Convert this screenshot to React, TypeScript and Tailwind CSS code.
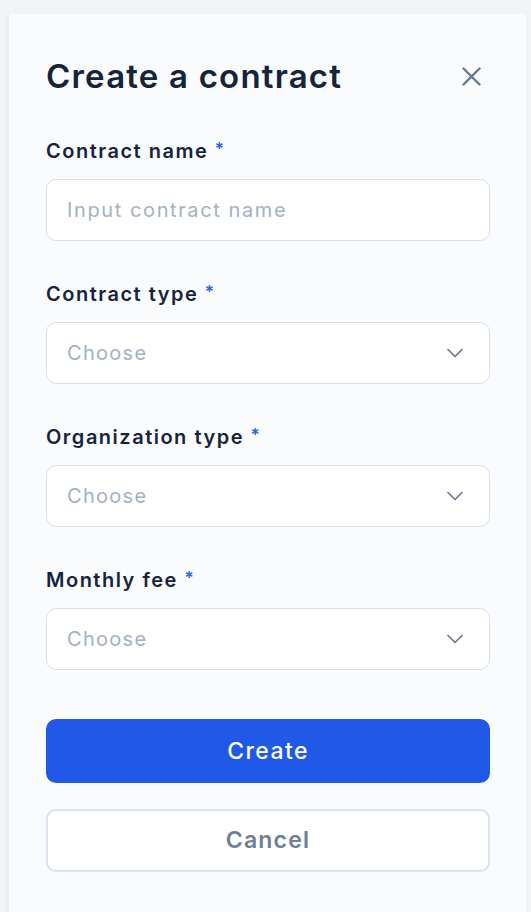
import { ChevronDown } from 'lucide-react';

const FIELDS = [
  { label: 'Contract type', placeholder: 'Choose' },
  { label: 'Organization type', placeholder: 'Choose' },
  { label: 'Monthly fee', placeholder: 'Choose' },
];

function Label({ children }: { children: string }) {
  return (
    <label className="block h-6 text-[20px] leading-6 font-semibold tracking-[1.5px] text-[#17243b]">
      {children}{' '}
      <span className="relative -top-[3px] text-[17px] leading-none text-[#2563eb]">*</span>
    </label>
  );
}

function SelectField({ label, placeholder }: { label: string; placeholder: string }) {
  return (
    <div className="mt-[41px]">
      <Label>{label}</Label>
      <button
        type="button"
        className="mt-4 flex h-[62px] w-full items-center justify-between rounded-[10px] border border-[#d6e0ec] bg-white pr-[20px] pl-[20px] text-left"
      >
        <span className="text-[20px] tracking-[1.3px] text-[#a3b1c2]">{placeholder}</span>
        <ChevronDown className="size-7 text-[#6b7a90]" strokeWidth={1.5} />
      </button>
    </div>
  );
}

export default function App() {
  return (
    <div
      className="min-h-[912px] bg-[#f1f3f6] pt-[14px] pl-[6px]"
      style={{ fontFamily: 'Inter, "Noto Sans", sans-serif' }}
    >
      <div className="min-h-[898px] w-[520px] border-l-[3px] border-[#e9eef5] bg-[#f9fbfd] pt-[42px] pr-[36px] pl-[37px]">
        <div className="flex h-10 items-center justify-between">
          <h2 className="text-[33px] leading-10 font-semibold tracking-[1.2px] text-[#15233b]">
            Create a contract
          </h2>
          <button type="button" className="mr-[9px] text-[#66778e]">
            <svg width="19" height="19" viewBox="0 0 19 19" fill="none" stroke="currentColor" strokeWidth="2.4" strokeLinecap="round">
              <path d="M1.5 1.5l16 16M17.5 1.5l-16 16" />
            </svg>
          </button>
        </div>

        <div className="mt-[43px]">
          <Label>Contract name</Label>
          <input
            placeholder="Input contract name"
            className="mt-4 h-[62px] w-full rounded-[10px] border border-[#d6e0ec] bg-white px-[20px] text-[20px] tracking-[1.6px] text-[#17243b] outline-none placeholder:text-[#a3b1c2]"
          />
        </div>

        {FIELDS.map((f) => (
          <SelectField key={f.label} label={f.label} placeholder={f.placeholder} />
        ))}

        <button
          type="button"
          className="mt-[49px] h-[64px] w-full rounded-[10px] bg-[#2058e8] text-[23px] font-medium tracking-[1.4px] text-white"
        >
          Create
        </button>
        <button
          type="button"
          className="mt-[26px] h-[63px] w-full rounded-[10px] border-2 border-[#dae3ee] bg-white text-[23px] font-semibold tracking-[1.2px] text-[#6e7f96]"
        >
          Cancel
        </button>
      </div>
    </div>
  );
}
